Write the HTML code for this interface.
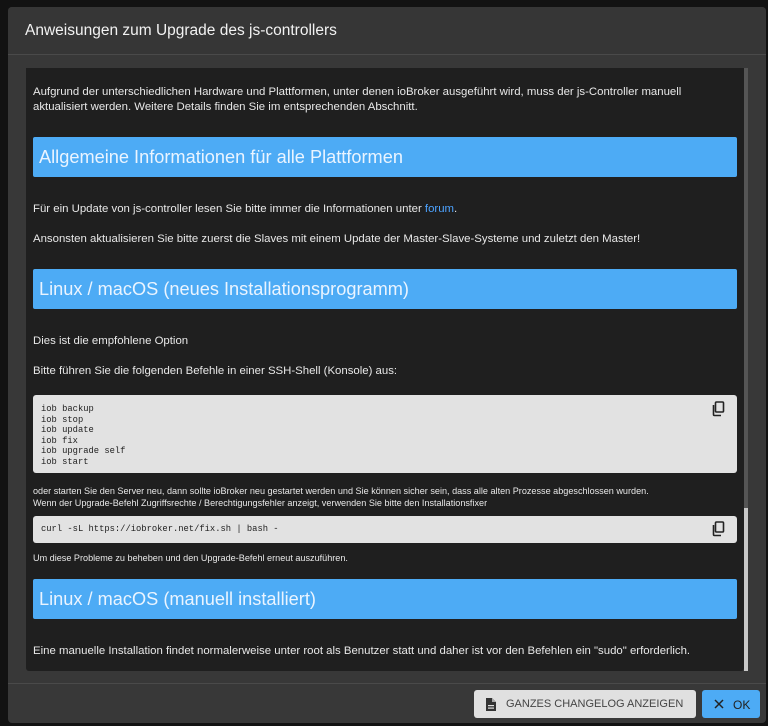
<!DOCTYPE html>
<html><head><meta charset="utf-8"><style>
*{margin:0;padding:0;box-sizing:border-box}
body{width:768px;height:726px;background:#121212;font-family:"Liberation Sans",sans-serif;position:relative;overflow:hidden;color:#fff}
.dlg{position:absolute;left:8px;top:7px;width:758px;height:716px;background:#383838;border-radius:4px}
.hdr{position:absolute;left:0;top:0;width:100%;height:48px;border-bottom:1px solid #4a4a4a;background:#363636;border-radius:4px 4px 0 0}
.hdr span{position:absolute;left:17px;top:15px;font-size:15.5px;color:#f2f2f2}
.panel{position:absolute;left:26px;top:68px;width:718px;height:603px;background:#1f1f1f;border-radius:0 0 3px 3px}
.sb{position:absolute;left:744px;top:68px;width:4px;height:603px;background:#555}
.sbt{position:absolute;left:744px;top:508px;width:4px;height:163px;background:#c8c8c8}
.t{position:absolute;left:33px;font-size:11.4px;color:#e8e8e8;white-space:nowrap}
.s{font-size:9.1px}
.h{position:absolute;left:33px;width:704px;height:40px;background:#4dabf5;border-radius:2px;font-size:18.2px;color:#eaf4ff;padding:10px 0 0 6px;white-space:nowrap}
.code{position:absolute;left:33px;width:704px;background:#e2e2e2;border-radius:3px;font-family:"Liberation Mono",monospace;font-size:8.8px;color:#222;line-height:10.6px;padding:0 0 0 8px}
.cp{position:absolute;right:12px;top:6px}
.foot{position:absolute;left:8px;top:683px;width:758px;height:1px;background:#4a4a4a}
.b1{position:absolute;left:474px;top:690px;width:222px;height:28px;background:#e0e0e0;border-radius:3px;color:#444;font-size:11px;white-space:nowrap}
.b2{position:absolute;left:702px;top:690px;width:58px;height:28px;background:#4dabf5;border-radius:3px;color:#222;font-size:12px}
a{color:#4da3ff;text-decoration:none}
</style></head><body>
<div class="dlg"><div class="hdr"><span>Anweisungen zum Upgrade des js-controllers</span></div></div>
<div class="panel"></div>
<div class="sb"></div><div class="sbt"></div>
<div class="t" style="top:85px;line-height:15px">Aufgrund der unterschiedlichen Hardware und Plattformen, unter denen ioBroker ausgeführt wird, muss der js-Controller manuell<br>aktualisiert werden. Weitere Details finden Sie im entsprechenden Abschnitt.</div>
<div class="h" style="top:137px">Allgemeine Informationen für alle Plattformen</div>
<div class="t" style="top:203px">Für ein Update von js-controller lesen Sie bitte immer die Informationen unter <a>forum</a>.</div>
<div class="t" style="top:233px">Ansonsten aktualisieren Sie bitte zuerst die Slaves mit einem Update der Master-Slave-Systeme und zuletzt den Master!</div>
<div class="h" style="top:269px">Linux / macOS (neues Installationsprogramm)</div>
<div class="t" style="top:335px">Dies ist die empfohlene Option</div>
<div class="t" style="top:365px">Bitte führen Sie die folgenden Befehle in einer SSH-Shell (Konsole) aus:</div>
<div class="code" style="top:395px;height:78px;padding-top:9px">iob backup<br>iob stop<br>iob update<br>iob fix<br>iob upgrade self<br>iob start
<svg class="cp" width="14" height="16" viewBox="0 0 14 16"><rect x="4.5" y="1" width="8" height="10" rx="1" fill="none" stroke="#222" stroke-width="1.6"/><path d="M2.5 4v9.5a1 1 0 0 0 1 1H10" fill="none" stroke="#222" stroke-width="1.6"/></svg></div>
<div class="t s" style="top:485px;line-height:12px">oder starten Sie den Server neu, dann sollte ioBroker neu gestartet werden und Sie können sicher sein, dass alle alten Prozesse abgeschlossen wurden.<br>Wenn der Upgrade-Befehl Zugriffsrechte / Berechtigungsfehler anzeigt, verwenden Sie bitte den Installationsfixer</div>
<div class="code" style="top:516px;height:27px;padding-top:8px">curl -sL https://iobroker.net/fix.sh | bash -
<svg class="cp" style="top:5px" width="14" height="16" viewBox="0 0 14 16"><rect x="4.5" y="1" width="8" height="10" rx="1" fill="none" stroke="#222" stroke-width="1.6"/><path d="M2.5 4v9.5a1 1 0 0 0 1 1H10" fill="none" stroke="#222" stroke-width="1.6"/></svg></div>
<div class="t s" style="top:553px">Um diese Probleme zu beheben und den Upgrade-Befehl erneut auszuführen.</div>
<div class="h" style="top:579px">Linux / macOS (manuell installiert)</div>
<div class="t" style="top:645px">Eine manuelle Installation findet normalerweise unter root als Benutzer statt und daher ist vor den Befehlen ein "sudo" erforderlich.</div>
<div class="foot"></div>
<div class="b1"><svg style="position:absolute;left:12px;top:8px" width="10" height="13" viewBox="0 0 10 13"><path d="M0 0h6l4 4v9H0z" fill="#333"/><path d="M6 0v4h4" fill="#aaa"/><rect x="2" y="7" width="6" height="1.2" fill="#e0e0e0"/><rect x="2" y="9.5" width="6" height="1.2" fill="#e0e0e0"/></svg><span style="position:absolute;left:32px;top:8px">GANZES CHANGELOG ANZEIGEN</span></div>
<div class="b2"><svg style="position:absolute;left:12px;top:9px" width="10" height="10" viewBox="0 0 10 10"><path d="M1 1l8 8M9 1l-8 8" stroke="#222" stroke-width="1.5"/></svg><span style="position:absolute;left:31px;top:8px">OK</span></div>
</body></html>
